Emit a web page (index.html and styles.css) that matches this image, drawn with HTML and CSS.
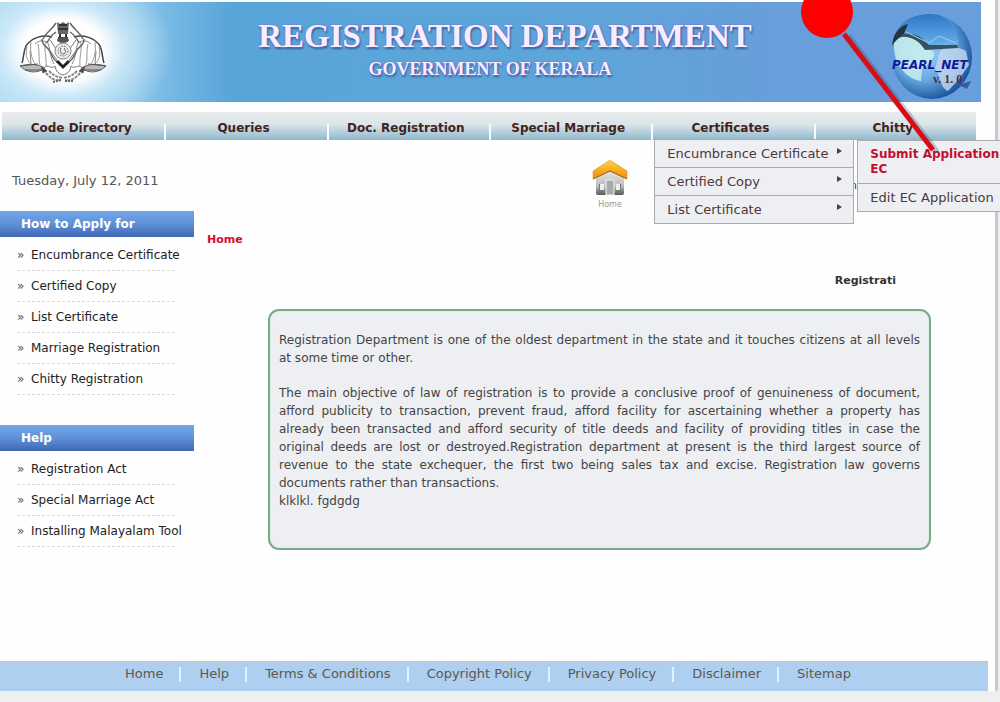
FILE: index.html
```html
<!DOCTYPE html>
<html lang="en">
  <head>
    <meta charset="UTF-8" />
    <meta name="viewport" content="width=device-width, initial-scale=1.0" />
    <title>Registration Department - Government of Kerala</title>
    <link rel="stylesheet" href="styles.css">
  </head>
  <body>
    <div class="page">
      <header class="banner">
        <svg class="emblem" viewBox="0 0 88 64" aria-hidden="true">
          <g id="half" fill="none" stroke="#666" stroke-width="1">
            <!-- elephant -->
            <path d="M33 17 C24 14 12 18 7 26 C4 32 5 38 3 43" stroke="#444" stroke-width="1.5" />
            <path d="M8 27 C6 36 8 40 12 44 M12 22 C11 30 12 38 16 44 M19 24 C21 32 19 38 21 45 M27 21 C24 29 28 36 27 46" stroke="#999" />
            <path d="M12 44 L11 31 M16 24 C20 20 25 20 29 23 C31 29 31 37 35 44" stroke="#888" />
            <path d="M1 46 C9 44 16 43 26 48 C18 54 8 53 1 46 Z" fill="#bbb" />
            <path d="M1 46 L19 44 M6 50 L24 50" stroke="#555" />
            <!-- raised trunk -->
            <path d="M24 19 C27 12 32 11 37 3 M28 23 C31 16 34 14 37 12 M23 19 C23 27 28 25 31 32 C34 38 36 42 41 43" stroke="#666" stroke-width="1.5" />
            <path d="M31 20 L38 30 M29 28 L38 40 M25 48 C29 43 32 50 36 46 C37 52 40 54 44 55" stroke="#777" />
            <path d="M22 46 L28 51 L24 53 Z" fill="#444" />
            <path d="M27 53 C32 59 37 61 42 60 M30 51 C35 56 38 57 44 58" stroke="#888" stroke-width="2" stroke-dasharray="3 1" />
          </g>
          <use href="#half" transform="translate(88 0) scale(-1 1)" />
          <path d="M38 2 L41 4 L44 2 L47 4 L50 2 L49 14 L39 14 Z" fill="#666" />
          <path d="M40 5 h8 M39 9 h10 M41 14 v4 M47 14 v4 M39 18 h10" stroke="#333" stroke-width="2" />
          <ellipse cx="44" cy="20" rx="6" ry="3" fill="#555" />
          <circle cx="44" cy="31" r="8" fill="#eee" stroke="#888" />
          <circle cx="44" cy="31" r="5" fill="none" stroke="#777" stroke-dasharray="2 1" />
          <path d="M42 28 C40 32 43 34 44 34 C47 34 47 30 45 28" fill="none" stroke="#555" />
          <path d="M38 41 L44 47 L50 41" fill="none" stroke="#222" stroke-width="3" />
          <path d="M34 62 L42 60 M46 61 L54 61" stroke="#666" stroke-width="2" stroke-dasharray="2 1" />
        </svg>
        <div class="banner-title">
          <h1>REGISTRATION DEPARTMENT</h1>
          <p>GOVERNMENT OF KERALA</p>
        </div>
        <svg class="globe" viewBox="0 0 84 90" role="img" aria-label="PEARL_NET v. 1.0">
          <defs>
            <radialGradient id="sea" cx="0.4" cy="0.4" r="0.62">
              <stop offset="0" stop-color="#a9d6f5" />
              <stop offset="0.6" stop-color="#68a9e2" />
              <stop offset="1" stop-color="#1c579f" />
            </radialGradient>
            <linearGradient id="cap" x1="0" y1="0" x2="0" y2="1">
              <stop offset="0" stop-color="#2f76c4" />
              <stop offset="1" stop-color="#69b3ee" />
            </linearGradient>
          </defs>
          <ellipse cx="43" cy="48" rx="40" ry="42" fill="url(#sea)" />
          <path d="M5 34 C10 24 18 22 28 27 C38 30 34 40 44 42 C48 50 38 55 33 60 L32 72 C18 70 4 56 5 34 Z" fill="#c7efeb" opacity="0.85" />
          <path d="M51 42 C60 36 70 38 77 42 L80 56 L70 70 L59 82 C50 78 52 66 46 60 Z" fill="#c5d9f2" opacity="0.8" />
          <path d="M3 35 C7 13 22 6 40 5 C56 4 66 15 70 33 L36 38 C33 28 22 25 10 29 Z" fill="url(#cap)" />
          <path d="M3 37 C4 25 10 17 19 15 L14 27 C10 28 6 32 3 37 Z" fill="#24343f" />
          <path d="M13 25 C24 23 32 27 38 34 L40 36 L68 36 L69 39 L36 41 C30 32 22 27 12 28 Z" fill="#375263" />
          <path d="M17 23 L40 34 L50 27 L69 35" fill="none" stroke="#9fd0f7" />
          <path d="M70 76 L82 72 L78 80 Z" fill="#2b5f9d" />
          <text class="globe-name" x="3" y="60">PEARL_NET</text>
          <text class="globe-version" x="44" y="74">v. 1. 0</text>
        </svg>
      </header>

      <nav class="main-nav">
        <ul>
          <li><a href="#">Code Directory</a></li>
          <li><a href="#">Queries</a></li>
          <li><a href="#">Doc. Registration</a></li>
          <li><a href="#">Special Marriage</a></li>
          <li>
            <a href="#">Certificates</a>
            <ul class="submenu">
              <li>
                <a href="#" class="has-children">Encumbrance Certificate</a>
                <ul class="submenu submenu-side">
                  <li><a href="#" class="current">Submit Application EC</a></li>
                  <li><a href="#">Edit EC Application</a></li>
                </ul>
              </li>
              <li><a href="#" class="has-children">Certified Copy</a></li>
              <li><a href="#" class="has-children">List Certificate</a></li>
            </ul>
          </li>
          <li><a href="#">Chitty</a></li>
        </ul>
      </nav>

      <div class="columns">
        <aside class="sidebar">
          <p class="date">Tuesday, July 12, 2011</p>
          <h2>How to Apply for</h2>
          <ul>
            <li><a href="#">Encumbrance Certificate</a></li>
            <li><a href="#">Certified Copy</a></li>
            <li><a href="#">List Certificate</a></li>
            <li><a href="#">Marriage Registration</a></li>
            <li><a href="#">Chitty Registration</a></li>
          </ul>
          <h2>Help</h2>
          <ul>
            <li><a href="#">Registration Act</a></li>
            <li><a href="#">Special Marriage Act</a></li>
            <li><a href="#">Installing Malayalam Tool</a></li>
          </ul>
        </aside>

        <main class="content">
          <div class="toolbar">
            <a href="#" class="home-link">
              <svg viewBox="0 0 36 38" aria-hidden="true">
                <defs>
                  <linearGradient id="roof" x1="0" y1="0" x2="0" y2="1">
                    <stop offset="0" stop-color="#ffd23c" />
                    <stop offset="1" stop-color="#f08c10" />
                  </linearGradient>
                  <linearGradient id="wall" x1="0" y1="0" x2="0" y2="1">
                    <stop offset="0" stop-color="#f4f4f4" />
                    <stop offset="0.7" stop-color="#bbb" />
                    <stop offset="1" stop-color="#555" />
                  </linearGradient>
                </defs>
                <path d="M4 18 L18 7 L32 18 V34 Q32 36 30 36 H6 Q4 36 4 34 Z" fill="url(#wall)" />
                <path d="M7 25 h5 v8 h-5 Z M24 25 h5 v8 h-5 Z" fill="#777" />
                <path d="M8 25 h4 v6 h-4 Z M24 25 h4 v6 h-4 Z" fill="#eee" />
                <path d="M14 36 V21 h8 V36 Z" fill="#aaa" stroke="#f5f5f5" />
                <path d="M18 1 L35 12 V20 L18 12 L1 20 V12 Z" fill="url(#roof)" stroke="#d98a1c" stroke-width="0.5" />
                <path d="M1 20 L18 12 L35 20" fill="none" stroke="#94611c" />
              </svg>
              <span>Home</span>
            </a>
            <span class="toolbar-text">n</span>
          </div>
          <a href="#" class="breadcrumb">Home</a>
          <p class="ticker">Registrati</p>
          <section class="intro">
            <p>Registration Department is one of the oldest department in the state and it touches citizens at all levels at some time or other.</p>
            <p>The main objective of law of registration is to provide a conclusive proof of genuineness of document, afford publicity to transaction, prevent fraud, afford facility for ascertaining whether a property has already been transacted and afford security of title deeds and facility of providing titles in case the original deeds are lost or destroyed.Registration department at present is the third largest source of revenue to the state exchequer, the first two being sales tax and excise. Registration law governs documents rather than transactions.<br>klklkl. fgdgdg</p>
          </section>
        </main>
      </div>

      <footer class="footer">
        <a href="#">Home</a>
        <a href="#">Help</a>
        <a href="#">Terms &amp; Conditions</a>
        <a href="#">Copyright Policy</a>
        <a href="#">Privacy Policy</a>
        <a href="#">Disclaimer</a>
        <a href="#">Sitemap</a>
      </footer>

      <!-- pointer to the open menu entry -->
      <svg class="callout" viewBox="0 0 140 156" aria-hidden="true">
        <path d="M48 36 L137 152" stroke="#335" stroke-opacity="0.25" stroke-width="6" />
        <path d="M44 34 L133 150" stroke="#d90d18" stroke-width="5" />
        <circle cx="27" cy="12" r="26" fill="#fe0000" />
      </svg>
    </div>
  </body>
</html>
```
FILE: styles.css
```css
/* Global styles */
* {
  box-sizing: border-box;
  margin: 0;
  padding: 0;
}

body {
  background-color: #eeeff0;
  font-family: Verdana, "DejaVu Sans", sans-serif;
  font-size: 12px;
  color: #333;
}

ul {
  list-style: none;
}

a {
  color: inherit;
  text-decoration: none;
}

.page {
  position: relative;
  display: flex;
  flex-direction: column;
  min-height: calc(100vh - 11px);
  margin-right: 2px;
  padding-top: 2px;
  background: #fefefe;
  border-right: 3px solid #c9c9cd;
}

/* Banner */
.banner {
  display: flex;
  justify-content: space-between;
  align-items: center;
  height: 100px;
  margin-right: 14px;
  padding: 0 8px 0 19px;
  background:
    radial-gradient(ellipse 110px 84px at 63px 48px, #fff 0%, #fff 36%, rgba(215, 238, 250, 0.8) 56%, rgba(160, 210, 240, 0) 100%),
    linear-gradient(to right, #a4d6f0 0, #8cc6ea 130px, #58a5d9 230px, #5ea5d9 60%, #679edb 78%, #679edb 100%);
}

.emblem {
  width: 88px;
  height: 64px;
}

.banner-title {
  margin-left: 14px;
  text-align: center;
  font-family: "Liberation Serif", "Times New Roman", serif;
  font-weight: bold;
  color: #f6eeff;
  text-shadow: 0 0 2px #8a5fd0, 1px 2px 2px #345c94;
}

.banner-title h1 {
  font-size: 33px;
  line-height: 38px;
}

.banner-title p {
  margin-right: 30px;
  padding-bottom: 4px;
  font-size: 18px;
  line-height: 28px;
}

.globe {
  width: 84px;
  height: 90px;
  margin-top: 4px;
}

.globe-name {
  font-family: "DejaVu Sans", sans-serif;
  font-size: 12px;
  font-weight: bold;
  font-style: italic;
  fill: #101a96;
}

.globe-version {
  font-family: "Liberation Serif", serif;
  font-size: 12px;
  font-weight: bold;
  fill: #5c2c30;
}

/* Navigation */
.main-nav {
  margin: 10px 19px 0 2px;
}

.main-nav > ul {
  display: grid;
  grid-template-columns: repeat(6, 1fr);
}

.main-nav > ul > li {
  position: relative;
  background: linear-gradient(#ebeced, #dbe4e8 45%, #8fb8cd);
}

.main-nav > ul > li + li::before {
  content: "";
  position: absolute;
  left: 0;
  bottom: 0;
  width: 2px;
  height: 16px;
  background: #f8fbfc;
}

.main-nav > ul > li > a {
  display: block;
  height: 28px;
  padding: 2px 4px 0 0;
  line-height: 28px;
  text-align: center;
  font-weight: bold;
  color: #42221c;
}

.submenu {
  position: absolute;
  z-index: 2;
  top: 27px;
  left: 3px;
  width: 200px;
  border: 1px solid #a9abae;
  background: #eeeff2;
}

.submenu li + li {
  border-top: 1px solid #a9abae;
}

.submenu a {
  display: block;
  padding: 6px 0 6px 12px;
  font-size: 13px;
  line-height: 15px;
  color: #4f3836;
}

.submenu .has-children {
  position: relative;
}

.submenu .has-children::after {
  content: "";
  position: absolute;
  right: 11px;
  top: 8px;
  border: 3px solid transparent;
  border-left: 5px solid #444;
  border-right: none;
}

.submenu-side {
  top: 0;
  left: 202px;
  width: 143px;
  border-right: none;
}

.submenu .current {
  font-size: 12px;
  font-weight: bold;
  color: #c60d30;
}

/* Columns */
.columns {
  display: grid;
  grid-template-columns: 194px 1fr;
  flex: 1;
}

.date {
  padding: 31px 0 20px 12px;
  font-size: 13px;
  line-height: 20px;
  color: #555;
}

.sidebar h2 {
  padding-left: 21px;
  font-size: 12px;
  line-height: 26px;
  color: #fff;
  background: linear-gradient(#72a6e6, #6091d8 50%, #4067b3);
}

.sidebar ul {
  width: 158px;
  margin: 3px 0 30px 17px;
}

.sidebar li {
  height: 31px;
  border-bottom: 1px dashed #dcd8dc;
  line-height: 30px;
  white-space: nowrap;
  color: #222;
}

.sidebar li::before {
  content: "»";
  display: inline-block;
  width: 14px;
  color: #555;
}

.toolbar {
  display: flex;
  align-items: center;
  height: 90px;
  padding-left: 398px;
}

.home-link {
  display: flex;
  flex-direction: column;
  align-items: center;
  width: 36px;
  padding-top: 2px;
  font-size: 8px;
  line-height: 16px;
  color: #999;
}

.home-link svg {
  width: 36px;
  height: 38px;
}

.toolbar-text {
  margin-left: 222px;
  font-size: 11px;
}

.breadcrumb {
  display: block;
  margin-left: 13px;
  font-size: 11px;
  font-weight: bold;
  line-height: 20px;
  color: #d0102f;
}

.ticker {
  margin: 21px 99px 18px 0;
  text-align: right;
  font-size: 11px;
  font-weight: bold;
  line-height: 20px;
}

.intro {
  min-height: 241px;
  margin: 0 64px 40px 74px;
  padding: 20px 9px;
  border: 2px solid #77ab85;
  border-radius: 11px;
  background: #edeff2;
  box-shadow: inset 0 0 0 1px #e0f0ee;
  line-height: 18px;
  text-align: justify;
  color: #444;
}

.intro p + p {
  margin-top: 17px;
}

/* Footer */
.footer {
  display: flex;
  justify-content: center;
  height: 30px;
  margin-right: 7px;
  padding-right: 12px;
  border-top: 2px solid #b9c9d9;
  background: #aecfef;
  font-size: 13px;
  line-height: 22px;
  color: #5c5850;
}

.footer a {
  display: flex;
  align-items: center;
  height: 22px;
}

.footer a + a::before {
  content: "";
  width: 2px;
  height: 15px;
  margin: 0 18px 0 16px;
  background: #e4f2fd;
}

/* Callout */
.callout {
  position: absolute;
  z-index: 3;
  top: 0;
  right: 55px;
  width: 140px;
  height: 156px;
  pointer-events: none;
}
```
